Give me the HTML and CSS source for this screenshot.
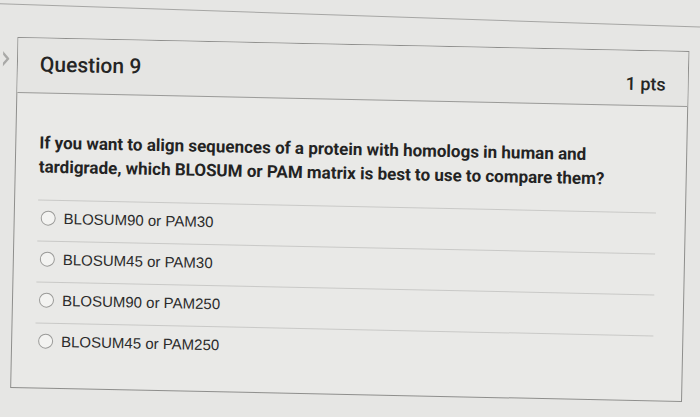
FILE: index.html
```html
<!DOCTYPE html>
<html lang="en">
<head>
<meta charset="utf-8">
<title>Question 9</title>
<link rel="stylesheet" href="styles.css">
</head>
<body>
<div class="page">
  <div class="rule"></div>
  <div class="row">
    <svg class="chev" width="12" height="24" viewBox="0 0 12 24" aria-hidden="true">
      <path d="M-2 4 L5 12 L-2 20" fill="none" stroke="#a9a9a7" stroke-width="2.4" stroke-linecap="round" stroke-linejoin="round"/>
    </svg>
    <div class="card">
      <div class="card-head">
        <h2 class="title">Question 9</h2>
        <span class="pts">1 pts</span>
      </div>
      <div class="card-body">
        <p class="question">If you want to align sequences of a protein with homologs in human and tardigrade, which BLOSUM or PAM matrix is best to use to compare them?</p>
        <div class="answers">
          <label class="answer"><span class="radio"></span><span class="label">BLOSUM90 or PAM30</span></label>
          <label class="answer"><span class="radio"></span><span class="label">BLOSUM45 or PAM30</span></label>
          <label class="answer"><span class="radio"></span><span class="label">BLOSUM90 or PAM250</span></label>
          <label class="answer"><span class="radio"></span><span class="label">BLOSUM45 or PAM250</span></label>
        </div>
      </div>
    </div>
  </div>
</div>
</body>
</html>
```

FILE: styles.css
```css
html, body {
  margin: 0;
  padding: 0;
}
body {
  width: 700px;
  height: 417px;
  overflow: hidden;
  background: #e6e6e4;
  font-family: Roboto, "Liberation Sans", sans-serif;
  color: #2a2a2a;
}
.page {
  transform: rotate(1.2deg);
  transform-origin: 350px 208px;
  padding-top: 15px;
}
.rule {
  height: 1px;
  background: #a6a6a4;
  margin: 0 -20px;
  transform: rotate(0.7deg);
}
.row {
  display: flex;
  align-items: flex-start;
  margin-top: 28px;
}
.chev {
  flex: none;
  margin-top: 10px;
}
.card {
  flex: none;
  width: 670px;
  margin-left: 2px;
  border: 1px solid #8e8e8c;
  background: #e9e9e7;
}
.card-head {
  display: flex;
  justify-content: space-between;
  align-items: flex-start;
  height: 54px;
  padding: 0 22px 0 22px;
  background: #e5e5e3;
  border-bottom: 1px solid #9a9a98;
}
.title {
  margin: 13px 0 0;
  font-size: 21px;
  font-weight: 500;
  line-height: 26px;
  color: #252525;
}
.pts {
  margin-top: 22px;
  font-size: 18px;
  font-weight: 500;
  line-height: 22px;
  color: #252525;
}
.card-body {
  padding: 37px 29px 23px 23px;
}
.question {
  margin: 0;
  font-size: 17px;
  font-weight: 700;
  line-height: 24px;
  color: #232323;
  padding-bottom: 21px;
  border-bottom: 1px solid #c9c9c7;
}
.answers {
  display: flex;
  flex-direction: column;
}
.answer {
  display: flex;
  align-items: center;
  gap: 8px;
  height: 41px;
  padding: 0 0 6px 3px;
  box-sizing: border-box;
  border-bottom: 1px solid #c9c9c7;
  font-family: "Liberation Sans", Arial, sans-serif;
  font-size: 15px;
  color: #2b2b2b;
}
.answer:last-child {
  border-bottom: none;
}
.radio {
  flex: none;
  width: 13px;
  height: 13px;
  border: 1px solid #9a9a98;
  border-radius: 50%;
  background: #f3f3f1;
}
```
